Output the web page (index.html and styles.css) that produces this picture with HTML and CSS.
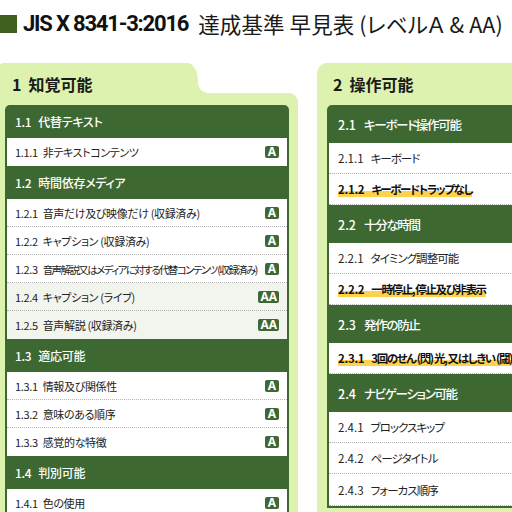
FILE: index.html
```html
<!DOCTYPE html>
<html lang="ja">
<head>
<meta charset="utf-8">
<title>JIS X 8341-3:2016 達成基準 早見表</title>
<link rel="stylesheet" href="styles.css">
</head>
<body>
<header class="title">
  <span class="sq"></span>
  <span class="t-en">JIS X 8341-3:2016</span>
  <span class="t-ja">達成基準 早見表 (レベルＡ &amp; AA)</span>
</header>
<main class="cols">
  <section class="panel p1">
    <div class="tab"><h2><span class="hn">1</span>知覚可能</h2></div>
    <div class="body">
      <div class="box">
        <h3><span class="n">1.1</span>代替テキスト</h3>
        <ul>
          <li><span class="txt"><span class="n">1.1.1</span>非テキストコンテンツ</span><span class="badge">A</span></li>
        </ul>
        <h3><span class="n">1.2</span>時間依存メディア</h3>
        <ul>
          <li><span class="txt"><span class="n">1.2.1</span>音声だけ及び映像だけ (収録済み)</span><span class="badge">A</span></li>
          <li><span class="txt"><span class="n">1.2.2</span>キャプション (収録済み)</span><span class="badge">A</span></li>
          <li><span class="txt tight"><span class="n">1.2.3</span>音声解説又はメディアに対する代替コンテンツ (収録済み)</span><span class="badge">A</span></li>
          <li class="aa"><span class="txt"><span class="n">1.2.4</span>キャプション (ライブ)</span><span class="badge">AA</span></li>
          <li class="aa"><span class="txt"><span class="n">1.2.5</span>音声解説 (収録済み)</span><span class="badge">AA</span></li>
        </ul>
        <h3><span class="n">1.3</span>適応可能</h3>
        <ul>
          <li><span class="txt"><span class="n">1.3.1</span>情報及び関係性</span><span class="badge">A</span></li>
          <li><span class="txt"><span class="n">1.3.2</span>意味のある順序</span><span class="badge">A</span></li>
          <li><span class="txt"><span class="n">1.3.3</span>感覚的な特徴</span><span class="badge">A</span></li>
        </ul>
        <h3><span class="n">1.4</span>判別可能</h3>
        <ul>
          <li><span class="txt"><span class="n">1.4.1</span>色の使用</span><span class="badge">A</span></li>
        </ul>
      </div>
    </div>
  </section>
  <section class="panel p2">
    <div class="tab"><h2><span class="hn">2</span>操作可能</h2></div>
    <div class="body">
      <div class="box">
        <h3><span class="n">2.1</span>キーボード操作可能</h3>
        <ul>
          <li><span class="txt"><span class="n">2.1.1</span>キーボード</span></li>
          <li class="hl"><span class="txt"><span class="mark"><span class="n">2.1.2</span>キーボードトラップなし</span></span></li>
        </ul>
        <h3><span class="n">2.2</span>十分な時間</h3>
        <ul>
          <li><span class="txt"><span class="n">2.2.1</span>タイミング調整可能</span></li>
          <li class="hl"><span class="txt"><span class="mark"><span class="n">2.2.2</span>一時停止, 停止及び非表示</span></span></li>
        </ul>
        <h3><span class="n">2.3</span>発作の防止</h3>
        <ul>
          <li class="hl"><span class="txt"><span class="mark"><span class="n">2.3.1</span>3回のせん (閃) 光, 又はしきい (閾)</span></span></li>
        </ul>
        <h3><span class="n">2.4</span>ナビゲーション可能</h3>
        <ul>
          <li><span class="txt"><span class="n">2.4.1</span>ブロックスキップ</span></li>
          <li><span class="txt"><span class="n">2.4.2</span>ページタイトル</span></li>
          <li><span class="txt"><span class="n">2.4.3</span>フォーカス順序</span></li>
        </ul>
      </div>
    </div>
  </section>
</main>
</body>
</html>
```

FILE: styles.css
```css
* { box-sizing: border-box; }

html, body {
  margin: 0;
  padding: 0;
  width: 512px;
  height: 512px;
  overflow: hidden;
  background: #ffffff;
  font-family: "Noto Sans", "Noto Sans CJK JP", sans-serif;
  color: #222222;
}

.title {
  height: 63px;
  padding-top: 13px;
  display: flex;
  align-items: flex-start;
  white-space: nowrap;
}

.sq {
  width: 17px;
  height: 18px;
  margin-top: 2px;
  background: #3f601f;
  flex: none;
}

.t-en {
  margin-left: 6px;
  font-family: Roboto, "Noto Sans", sans-serif;
  font-weight: bold;
  font-size: 22px;
  line-height: 22px;
  color: #111111;
  letter-spacing: -1.2px;
}

.t-ja {
  margin-left: 10px;
  font-family: "Noto Sans CJK JP", sans-serif;
  font-feature-settings: "palt";
  font-size: 21.5px;
  line-height: 22px;
  color: #1a1a1a;
  letter-spacing: 0.1px;
}

.cols {
  display: flex;
  gap: 19px;
  margin-left: -5px;
  align-items: flex-start;
}

.panel {
  flex: none;
}

.p1 { width: 303px; }
.p2 { width: 200px; }

.tab {
  position: relative;
  height: 30px;
  background: #dcf2ae;
  padding: 12px 0 0 17px;
}

.p1 .tab {
  width: 203px;
  border-radius: 10px 11px 0 0 / 10px 18px 0 0;
}

.p1 .tab::after {
  content: "";
  position: absolute;
  left: 100%;
  bottom: 0;
  width: 10px;
  height: 10px;
  background: radial-gradient(circle at 100% 0, transparent 9.5px, #dcf2ae 10px);
}

.p2 .tab {
  width: 100%;
  border-radius: 10px 0 0 0;
  padding-left: 16px;
}

.tab h2 {
  margin: 0;
  font-family: "Noto Sans CJK JP", sans-serif;
  font-feature-settings: "palt";
  font-size: 16px;
  line-height: 18px;
  font-weight: bold;
  color: #1a1a1a;
}

.hn { margin-right: 7px; }

.body {
  background: #dcf2ae;
  padding: 12px 9px 0 10px;
  height: 420px;
}

.p2 .body { padding-right: 0; }

.p1 .body { border-top-right-radius: 9px; }

.box {
  background: #3e6832;
  border-radius: 5px;
  padding: 0 2px 2px;
}

.p2 .box {
  border-radius: 5px 0 0 0;
  padding-right: 0;
}

h3 {
  margin: 0;
  height: 33px;
  display: flex;
  align-items: center;
  padding-left: 8px;
  font-family: "Noto Sans CJK JP", sans-serif;
  font-feature-settings: "palt";
  font-size: 12px;
  font-weight: 500;
  letter-spacing: -0.3px;
  color: #ffffff;
}

h3 .n { margin-right: 7px; }

ul {
  list-style: none;
  margin: 0;
  padding: 0;
  background: #ffffff;
}

li {
  height: 28px;
  display: flex;
  align-items: center;
  justify-content: space-between;
  gap: 4px;
  padding: 0 8px;
  border-bottom: 1px dotted #b4b4b4;
  font-family: "Noto Sans CJK JP", sans-serif;
  font-feature-settings: "palt";
  font-size: 11px;
  letter-spacing: -0.35px;
  color: #222222;
  white-space: nowrap;
}

li:last-child { border-bottom: none; }

li.aa { background: #f2f5ee; }

.txt { min-width: 0; }

.txt .n { margin-right: 5px; }

.tight { font-size: 10.5px; letter-spacing: -1.6px; }
.tight .n { font-size: 11px; letter-spacing: -0.35px; }

.badge {
  flex: none;
  min-width: 14px;
  height: 12px;
  padding: 0 2px;
  border-radius: 2px;
  background: #3e6832;
  color: #ffffff;
  font-family: "Noto Sans", sans-serif;
  font-weight: bold;
  font-size: 12px;
  line-height: 12px;
  letter-spacing: 0;
  text-align: center;
}

/* right column */
.p2 h3 {
  height: 38px;
  padding-left: 9px;
  font-size: 12.5px;
  letter-spacing: -1.3px;
}

.p2 h3 .n { letter-spacing: 0; margin-right: 8px; }

.p2 li {
  height: 31px;
  padding-left: 9px;
  font-size: 11.5px;
  letter-spacing: -0.95px;
}

.p2 li:last-child { border-bottom: 1px dotted #b4b4b4; }
.p2 ul:last-child li:last-child { height: 32px; }

.p2 .txt .n { margin-right: 7px; letter-spacing: 0; }

.mark {
  font-weight: bold;
  letter-spacing: -1.4px;
  background: linear-gradient(transparent 62%, #ffd24a 62%);
  color: #111111;
}

.p2 .mark .n { letter-spacing: -0.3px; }
```
